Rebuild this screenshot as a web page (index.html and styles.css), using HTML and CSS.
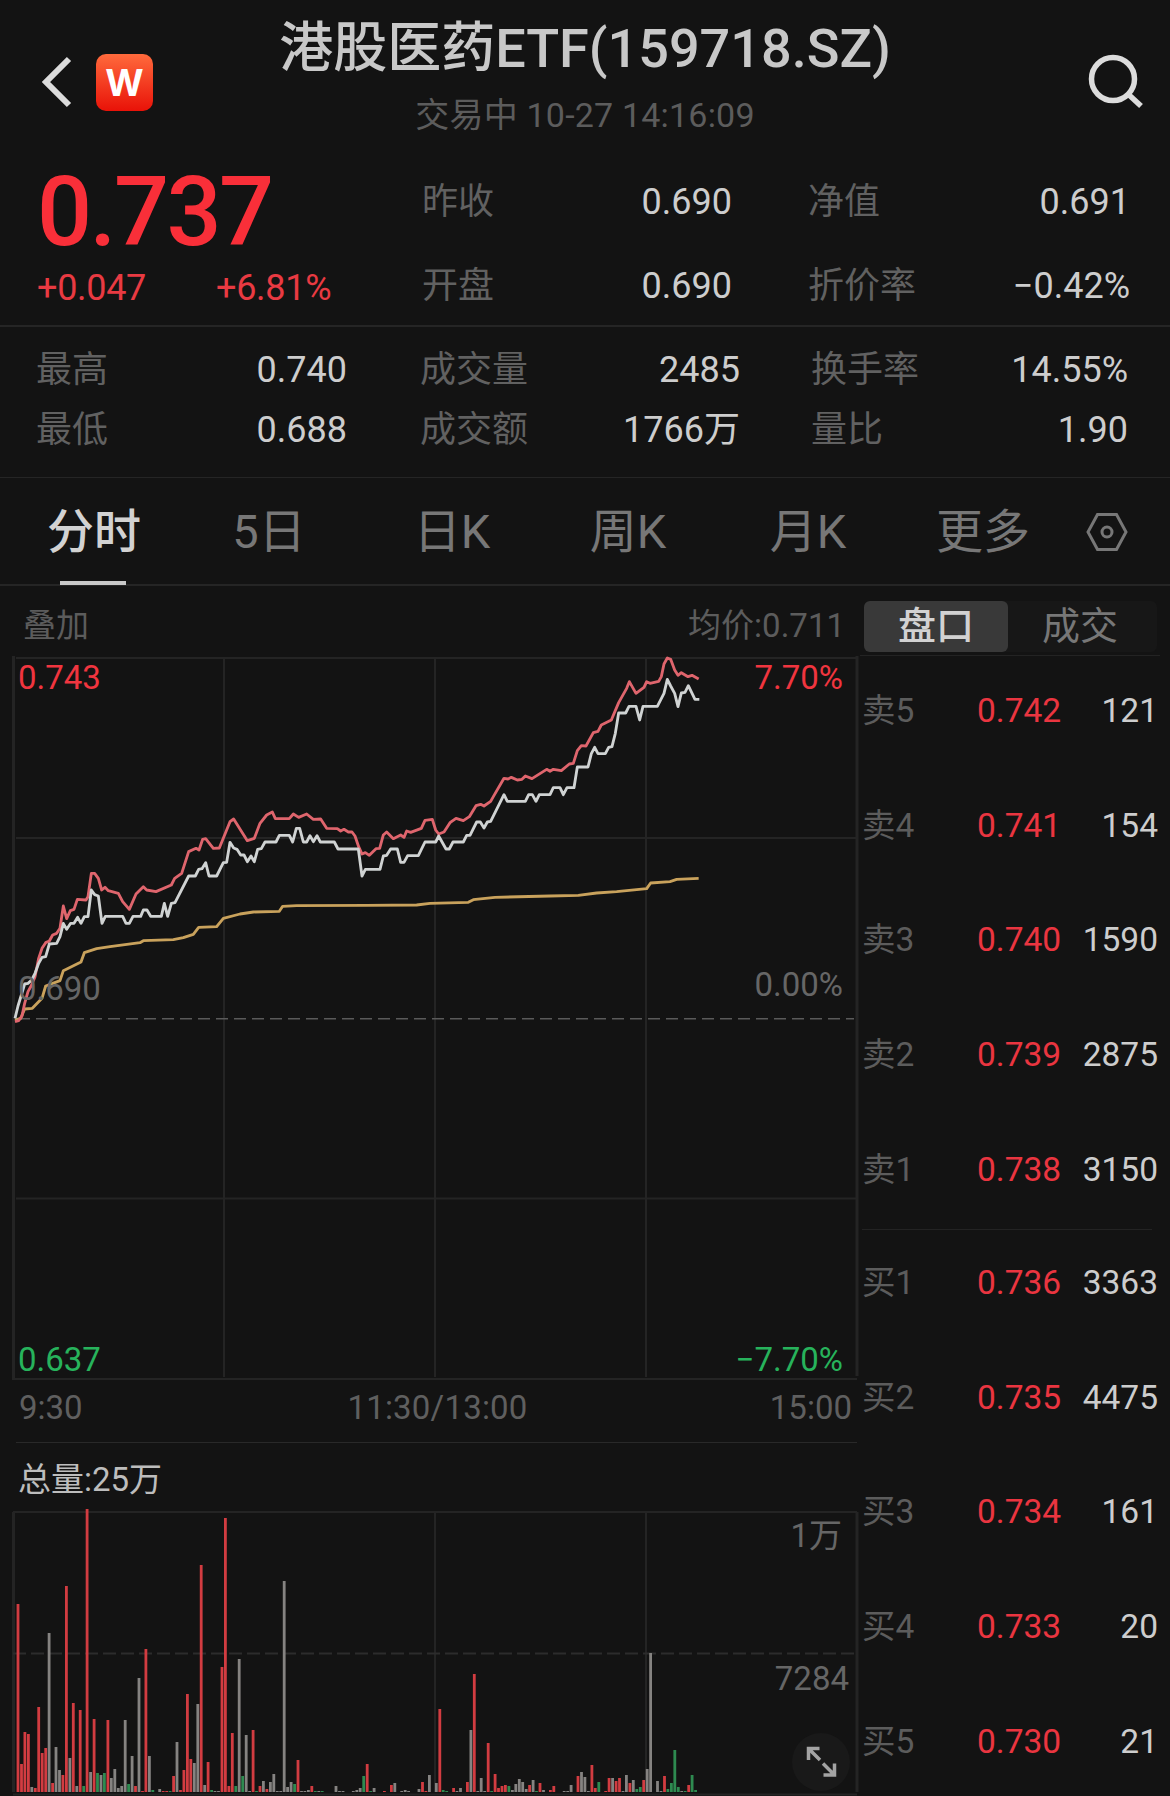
FILE: index.html
```html
<!DOCTYPE html>
<html lang="zh">
<head>
    <meta charset="UTF-8">
    <meta name="viewport" content="width=device-width, initial-scale=1.0">
    <title>港股医药ETF(159718.SZ)</title>
    <link rel="stylesheet" href="styles.css">
</head>
<body>
    <header class="header">
        <div class="header-left">
            <svg class="icon-back" viewBox="0 0 32 54"><path d="M29 4 L6 27 L29 50"/></svg>
            <span class="logo">W</span>
        </div>
        <div class="header-title">
            <h1>港股医药ETF(159718.SZ)</h1>
            <p>交易中 10-27 14:16:09</p>
        </div>
        <svg class="icon-search" viewBox="0 0 60 60"><circle cx="26" cy="26" r="21.5"/><path d="M41 41 L54 53"/></svg>
    </header>

    <section class="quote">
        <div class="price">
            <div class="price-now">0.737</div>
            <div class="price-change"><span>+0.047</span><span>+6.81%</span></div>
        </div>
        <dl class="stats">
            <div><dt>昨收</dt><dd>0.690</dd></div>
            <div><dt>净值</dt><dd>0.691</dd></div>
            <div><dt>开盘</dt><dd>0.690</dd></div>
            <div><dt>折价率</dt><dd>−0.42%</dd></div>
        </dl>
    </section>

    <dl class="stats stats-more">
        <div><dt>最高</dt><dd>0.740</dd></div>
        <div><dt>成交量</dt><dd>2485</dd></div>
        <div><dt>换手率</dt><dd>14.55%</dd></div>
        <div><dt>最低</dt><dd>0.688</dd></div>
        <div><dt>成交额</dt><dd>1766万</dd></div>
        <div><dt>量比</dt><dd>1.90</dd></div>
    </dl>

    <nav class="tabs">
        <a class="active">分时</a>
        <a>5日</a>
        <a>日K</a>
        <a>周K</a>
        <a>月K</a>
        <a>更多</a>
        <svg class="icon-setting" viewBox="0 0 44 40"><path d="M12.5 2.5 H31.5 L41 20 L31.5 37.5 H12.5 L3 20 Z"/><circle cx="22" cy="20" r="5"/></svg>
    </nav>

    <main class="main">
        <section class="charts">
            <div class="chart-head"><span>叠加</span><span>均价:0.711</span></div>

            <svg class="chart-price" viewBox="0 655 860 725">
                <g class="grid">
                    <path d="M16 658 H857 M16 838 H857 M16 1198.5 H857 M13 1379 H857"/>
                    <path d="M224 657 V1377 M435 657 V1377 M646 657 V1377"/>
                    <path class="side" d="M13.5 656 V1380 M857 656 V1376"/>
                </g>
                <path class="zero" d="M18 1018.7 H854"/>
                <g class="lines" transform="translate(0 640) scale(.33333)">
                    <polyline class="avg" points="45,1140 62,1135 74,1107 97,1105 126,1075 137,1038 180,1022 190,992 243,966 253,938 290,926 330,920 420,908 430,902 520,899 550,893 580,883 596,862 650,860 670,835 720,822 760,816 838,814 848,799 890,797 1100,796 1250,795 1290,790 1405,787 1420,779 1485,772 1650,768 1735,766 1790,759 1850,755 1940,746 1952,729 2010,725 2030,718 2096,715"/>
                    <polyline class="index" points="45,1145 56,1142 66,1128 74,1090 84,1055 95,1035 105,1010 116,955 126,925 137,908 148,903 158,885 170,880 180,865 190,798 200,836 211,812 222,808 232,778 258,780 264,770 274,700 284,700 295,715 305,750 315,742 325,752 355,760 368,785 388,808 408,762 430,740 440,750 468,755 514,735 524,715 545,700 566,635 588,625 597,630 608,598 617,596 640,625 658,624 690,545 701,537 742,602 763,595 780,550 800,525 817,516 826,536 868,536 880,522 896,532 920,522 940,538 962,537 980,565 1012,566 1022,573 1032,568 1045,576 1056,576 1065,588 1076,620 1086,642 1096,638 1108,646 1128,626 1139,625 1150,585 1160,576 1180,596 1202,585 1212,592 1220,573 1232,577 1264,565 1275,541 1297,538 1307,570 1316,582 1332,576 1350,548 1368,535 1390,542 1408,530 1428,497 1442,493 1452,498 1472,484 1480,470 1512,415 1524,417 1534,412 1552,420 1566,418 1576,408 1596,416 1640,388 1650,394 1660,388 1684,392 1708,372 1720,370 1732,332 1744,317 1758,318 1780,278 1794,274 1804,255 1834,240 1856,188 1880,145 1888,125 1908,160 1932,142 1940,125 1950,130 1976,124 1984,110 1992,72 2002,54 2012,58 2024,90 2034,106 2044,98 2064,110 2076,106 2096,117"/>
                    <polyline class="now" points="45,1135 54,1098 64,1065 74,1032 84,1030 95,1020 105,1000 116,970 126,952 137,950 148,912 170,910 180,890 190,850 200,868 212,850 222,850 233,832 243,850 253,830 264,830 274,750 284,764 295,768 306,850 316,829 368,829 378,850 388,850 399,829 422,829 430,810 441,810 452,829 484,829 493,790 503,829 514,790 525,788 566,708 586,708 596,688 606,686 617,668 627,708 650,708 670,668 680,667 690,607 701,624 711,628 722,645 732,645 742,665 753,648 763,665 773,628 784,626 795,606 828,606 838,586 868,586 878,606 889,565 899,565 910,606 920,606 930,587 940,605 951,587 961,606 1003,606 1014,627 1075,627 1086,708 1096,688 1140,688 1150,648 1160,646 1172,627 1192,627 1202,667 1212,667 1223,647 1255,647 1275,606 1307,606 1316,588 1338,627 1348,627 1359,606 1390,606 1400,586 1410,586 1430,546 1441,546 1452,564 1462,546 1472,544 1512,464 1522,484 1576,484 1586,464 1597,464 1608,484 1618,464 1650,464 1660,443 1680,443 1690,464 1701,443 1722,443 1732,381 1764,381 1774,341 1784,322 1794,341 1816,341 1826,322 1836,320 1846,280 1856,219 1877,219 1887,199 1908,199 1919,240 1929,199 1972,199 1992,160 2002,118 2012,138 2024,160 2034,200 2044,159 2055,157 2065,137 2085,178 2098,178"/>
                </g>
                <text class="up" x="18" y="689">0.743</text>
                <text class="up end" x="843" y="689">7.70%</text>
                <text x="18" y="1000">0.690</text>
                <text class="end" x="843" y="996">0.00%</text>
                <text class="down" x="18" y="1371">0.637</text>
                <text class="down end" x="843" y="1371">−7.70%</text>
            </svg>

            <div class="axis"><span>9:30</span><span>11:30/13:00</span><span>15:00</span></div>
            <div class="volume-head">总量:25万</div>

            <svg class="chart-volume" viewBox="0 1505 860 291">
                <g class="grid">
                    <path d="M13 1512 H857 M13 1794.5 H857 M435 1512 V1792 M646 1512 V1792"/>
                    <path class="side" d="M13.5 1512 V1792 M857 1512 V1792"/>
                    <path class="half" d="M13 1653.5 H857"/>
                </g>
                <g id="bars"></g>
                <text class="end" x="842" y="1547">1万</text>
                <text class="end" x="849" y="1690">7284</text>
                <g class="expand">
                    <circle cx="821" cy="1762" r="29"/>
                    <path d="M819.5 1748.5 H808.5 V1760 M808.5 1748.5 L820 1760"/>
                    <path d="M823.5 1775 H834.5 V1763.5 M834.5 1775 L823 1763.5"/>
                </g>
            </svg>
        </section>

        <aside class="book">
            <div class="switch"><span class="active">盘口</span><span>成交</span></div>
            <ul class="orders sell">
                <li><span>卖5</span><b>0.742</b><i>121</i></li>
                <li><span>卖4</span><b>0.741</b><i>154</i></li>
                <li><span>卖3</span><b>0.740</b><i>1590</i></li>
                <li><span>卖2</span><b>0.739</b><i>2875</i></li>
                <li><span>卖1</span><b>0.738</b><i>3150</i></li>
            </ul>
            <ul class="orders buy">
                <li><span>买1</span><b>0.736</b><i>3363</i></li>
                <li><span>买2</span><b>0.735</b><i>4475</i></li>
                <li><span>买3</span><b>0.734</b><i>161</i></li>
                <li><span>买4</span><b>0.733</b><i>20</i></li>
                <li><span>买5</span><b>0.730</b><i>21</i></li>
            </ul>
        </aside>
    </main>
    <script src="volume.js"></script>
</body>
</html>
```
FILE: styles.css
```css
* {
    box-sizing: border-box;
    margin: 0;
    padding: 0;
}

body {
    width: 1170px;
    height: 1796px;
    overflow: hidden;
    background-color: #131313;
    color: #cdcdcd;
    font-family: Roboto, "Noto Sans CJK SC", sans-serif;
    font-size: 36px;
    line-height: 1;
}

svg {
    display: block;
    fill: none;
}

/* 顶部 */
.header {
    display: grid;
    grid-template-columns: 200px 1fr 200px;
    height: 140px;
}

.header-left {
    display: flex;
    align-items: center;
    gap: 24px;
    height: 164px;
    padding-left: 40px;
}

.icon-back {
    width: 32px;
    height: 54px;
    stroke: #dcdcdc;
    stroke-width: 6;
}

.logo {
    width: 57px;
    height: 57px;
    border-radius: 10px;
    background: linear-gradient(#ff6a3c, #e91208);
    color: white;
    font-family: Inter, sans-serif;
    font-size: 37px;
    font-weight: 700;
    line-height: 57px;
    text-align: center;
}

.header-title {
    text-align: center;
}

.header-title h1 {
    font-size: 54px;
    font-weight: 500;
    line-height: 70px;
    margin-top: 14px;
    white-space: nowrap;
    color: #c8c8c8;
}

.header-title p {
    margin-top: 11px;
    font-size: 34px;
    line-height: 40px;
    letter-spacing: 0.2px;
    color: #5c5c5c;
}

.icon-search {
    width: 60px;
    height: 60px;
    margin: 53px 0 0 117px;
    stroke: #dcdcdc;
    stroke-width: 5.5;
}

/* 报价 */
.quote {
    display: flex;
    height: 187px;
    padding: 20px 40px 0 37px;
    border-bottom: 2px solid #252525;
}

.price {
    width: 385px;
    color: #f92f39;
}

.price-now {
    font-size: 97px;
    font-weight: 500;
    line-height: 104px;
    letter-spacing: -2.6px;
}

.price-change {
    display: flex;
    gap: 70px;
    margin-top: 4px;
    line-height: 40px;
    letter-spacing: -0.3px;
    color: #e93a42;
}

.stats div {
    display: flex;
    justify-content: space-between;
    align-items: center;
}

.stats dt {
    color: #616161;
}

.quote .stats {
    flex: 1;
    display: grid;
    grid-template-columns: 310px 322px;
    grid-auto-rows: 84px;
    column-gap: 76px;
}

.stats-more {
    display: grid;
    grid-template-columns: 311px 320px 320px;
    grid-auto-rows: 60px;
    column-gap: 73px;
    height: 151px;
    padding: 13px 40px 0 36px;
    border-bottom: 1px solid #252525;
}

.stats-more div:nth-child(3n) {
    margin: 0 5px 0 -2px;
}

/* 周期切换 */
.tabs {
    display: grid;
    grid-template-columns: 188px 162px 204px 148px 212px 138px 110px;
    align-items: center;
    justify-items: center;
    height: 108px;
    border-bottom: 2px solid #252525;
    font-size: 47px;
    line-height: 108px;
    color: #777;
}

.tabs .active {
    position: relative;
    color: #d2d2d2;
    font-weight: 500;
}

.tabs .active::after {
    content: "";
    position: absolute;
    left: 50%;
    bottom: 1px;
    width: 66px;
    height: 4px;
    margin-left: -34px;
    background-color: #c8c8c8;
}

.icon-setting {
    width: 44px;
    height: 40px;
    stroke: #777;
    stroke-width: 3;
}

.main {
    display: flex;
}

.charts {
    width: 860px;
    font-size: 33px;
}

.chart-head {
    display: flex;
    justify-content: space-between;
    height: 69px;
    padding: 0 15px 0 23px;
    line-height: 80px;
    color: #5c5c5c;
}

.chart-price {
    width: 860px;
    height: 725px;
}

.grid {
    stroke: #242424;
    stroke-width: 2;
}

.grid .side {
    stroke-width: 3;
}

.grid .half {
    stroke: #2c2c2c;
    stroke-dasharray: 13 5;
}

.zero {
    stroke: #5a5a5a;
    stroke-width: 1.6;
    stroke-dasharray: 12 6;
}

.lines {
    stroke-width: 8.5;
    stroke-linejoin: round;
}

.avg { stroke: #c9a25c; }
.index { stroke: #df656d; }
.now { stroke: #d0d3d3; }

.charts text {
    fill: #666;
    font-size: 33px;
}

.charts .end { text-anchor: end; }
.charts .up { fill: #f0353f; }
.charts .down { fill: #27b35c; }

.axis {
    display: grid;
    grid-template-columns: 1fr auto 1fr;
    height: 63px;
    margin: 0 3px 0 16px;
    padding: 0 5px 0 3px;
    border-bottom: 1px solid #292929;
    line-height: 55px;
    color: #5f5f5f;
}

.axis span:nth-child(2) {
    padding-left: 4px;
    letter-spacing: 0.2px;
}

.axis span:last-child {
    text-align: right;
}

.volume-head {
    height: 62px;
    padding-left: 18px;
    line-height: 74px;
    color: #bdbdbd;
}

.chart-volume {
    width: 860px;
    height: 291px;
}

#bars { stroke-width: 2.8; }
#bars .u { stroke: #d23c41; }
#bars .f { stroke: #858381; }
#bars .d { stroke: #2e8a50; }

.expand {
    stroke: #a3a3a3;
    stroke-width: 3.5;
}

.expand circle {
    fill: #191919;
    stroke: none;
}

/* 盘口 */
.book {
    width: 310px;
    padding-top: 15px;
}

.switch {
    display: flex;
    width: 293px;
    height: 51px;
    margin-left: 4px;
    border-radius: 6px;
    background-color: #171717;
    font-size: 38px;
    line-height: 51px;
    text-align: center;
    color: #777;
}

.switch span {
    width: 144px;
}

.switch .active {
    border-radius: 6px;
    background-color: #393939;
    color: #d2d2d2;
    font-weight: 500;
}

.orders {
    list-style: none;
    width: 300px;
    font-size: 33.5px;
}

.sell {
    height: 574px;
    margin-top: 3px;
    border-top: 1px solid #232323;
}

.orders li {
    display: grid;
    grid-template-columns: 115px 90px 91px;
    align-items: center;
    height: 114.7px;
    padding: 0 0 5px 2px;
}

.buy {
    width: 290px;
    margin-left: 2px;
    border-top: 1px solid #232323;
}

.buy li {
    margin-left: -2px;
    padding-bottom: 9px;
}

.orders span {
    color: #5c5c5c;
}

.orders b {
    font-weight: 400;
    color: #ea3540;
}

.orders i {
    font-style: normal;
    text-align: right;
}
```
FILE: volume.js
```javascript
// 每分钟成交量: u 涨 / d 跌 / f 平, "-" 无成交
const volumes = `
u188 u28 u60 u58 f5 u4 u85 u39 u44 f159 u9 f45 f22 u17 u206 f34 u89 f6 u82 d6
u283 f20 u73 d19 f17 d19 u72 f14 f23 f4 f6 f72 d8 f36 u6 f114 u1 u143 f36 d2
- f3 u1 u1 d1 u16 f50 u2 u22 u98 u33 f29 f88 u227 f7 u30 d2 f1 f1 u125
u274 u6 u59 d6 f133 d16 f57 f1 u62 d1 u6 f11 u3 f10 f18 f1 f1 f211 f5 f10
d8 u32 f1 f1 f2 u6 d1 f1 d1 - - - f6 f1 f1 - - f1 f2 f4
d16 u28 d1 f4 - - u1 - u7 f9 - f1 f2 f1 - - f3 u10 u1 f17
- f9 u83 d2 d1 - u4 f1 f4 - u10 f62 u118 f1 f14 f1 u49 d1 u18 u4
u6 u7 d6 f2 f8 f13 f10 f3 u7 f12 d1 u9 f2 - u2 u6 - - f1 f1
f7 - u16 f20 f15 f1 u27 u4 d10 - u1 u14 f14 u11 u14 f1 f17 u9 f12 d3
d5 u12 f23 f139 - f11 f1 u16 d3 d9 d42 d5 f1 d1 u7 d17 d2
`.trim().split(/\s+/);

const paths = { u: "", d: "", f: "" };
volumes.forEach((v, i) => {
    if (v === "-") return;
    const x = (18 + i * 3.457).toFixed(1);
    paths[v[0]] += `M${x} 1792v-${v.slice(1)}`;
});

document.getElementById("bars").innerHTML = Object.keys(paths)
    .map(k => `<path class="${k}" d="${paths[k]}"/>`)
    .join("");
```
